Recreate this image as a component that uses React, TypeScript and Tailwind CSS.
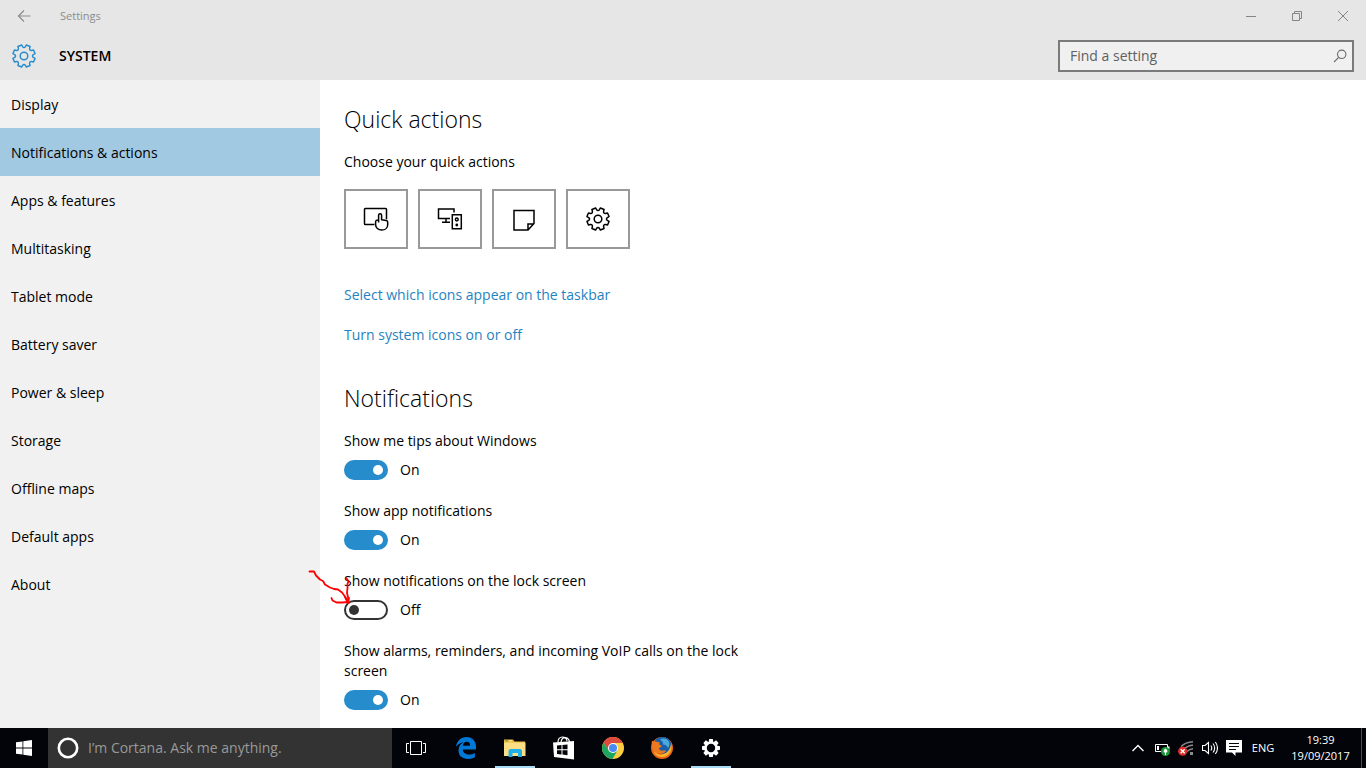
import { useState } from "react";
import type { ReactNode } from "react";

const sections = [
  "Display",
  "Notifications & actions",
  "Apps & features",
  "Multitasking",
  "Tablet mode",
  "Battery saver",
  "Power & sleep",
  "Storage",
  "Offline maps",
  "Default apps",
  "About",
];

const notificationSettings = [
  { id: "tips", label: "Show me tips about Windows", on: true },
  { id: "apps", label: "Show app notifications", on: true },
  { id: "lock", label: "Show notifications on the lock screen", on: false },
  {
    id: "alarms",
    label: "Show alarms, reminders, and incoming VoIP calls on the lock screen",
    on: true,
  },
];

// Outline of a cog with eight teeth, centred on 0,0
function cogPath(outer: number, inner: number, offset: number) {
  const at = (r: number, deg: number) => {
    const a = ((deg - 90) * Math.PI) / 180;
    return `${(r * Math.cos(a)).toFixed(2)} ${(r * Math.sin(a)).toFixed(2)}`;
  };
  let d = "";
  for (let i = 0; i < 8; i++) {
    const a = offset + i * 45;
    d += `${i === 0 ? "M" : "L"}${at(outer, a - 10)} L${at(outer, a + 10)} L${at(inner + 0.6, a + 14)} `;
    d += `Q${at(inner - 1.2, a + 22.5)} ${at(inner + 0.6, a + 31)} `;
  }
  return d + "Z";
}

function CogIcon({ className }: { className?: string }) {
  return (
    <svg viewBox="-12 -12 24 24" className={className} fill="none" stroke="currentColor" strokeWidth="1.5" strokeLinejoin="round">
      <path d={cogPath(11.3, 8.8, 22.5)} />
      <circle r="3.8" />
    </svg>
  );
}

/* Quick action icons */
function TabletModeIcon() {
  return (
    <svg viewBox="0 0 32 32" className="size-8" fill="none" stroke="black" strokeWidth="1.5" strokeLinejoin="round">
      <path d="M14.5 21.5H5.3a.8.8 0 0 1-.8-.8V6.3a.8.8 0 0 1 .8-.8h20.4a.8.8 0 0 1 .8.8v10" />
      <path d="M18.6 19.500v-7.300a1.500 1.500 0 0 1 3 0v4.600l4.600.7c1 .2 1.500.8 1.500 1.700v2.200c0 3.300-2.500 5.700-5.900 5.700-3.600 0-6.200-2.300-6.200-5.600v-2.700c0-1.200 1-2 3-1.900" />
    </svg>
  );
}

function ProjectIcon() {
  return (
    <svg viewBox="0 0 32 32" className="size-8" fill="none" stroke="black" strokeWidth="1.5">
      <path d="M16 15.500H4.500v-9.500h15.500v3.500M12 15.500v3.500M8 19.300h8" />
      <path d="M18.300 11.700h9v14h-9z" />
      <circle cx="22.800" cy="16.500" r="1.400" />
      <circle cx="22.800" cy="22" r="1.400" fill="black" stroke="none" />
    </svg>
  );
}

function NoteIcon() {
  return (
    <svg viewBox="0 0 32 32" className="size-8" fill="none" stroke="black" strokeWidth="1.500">
      <path d="M6 7.500h20v13l-6 6.500H6zM26 21h-6v6" />
    </svg>
  );
}

const quickActions = [
  { name: "Tablet mode", icon: <TabletModeIcon /> },
  { name: "Project", icon: <ProjectIcon /> },
  { name: "Note", icon: <NoteIcon /> },
  { name: "All settings", icon: <CogIcon className="size-6" /> },
];

/* Taskbar icons */
function EdgeIcon() {
  return (
    <svg viewBox="0 0 20 22" className="h-[22px] w-5" fill="#0078d7">
      <path d="M0 9.700C.8 4 4.800 0 10.500 0 16.500 0 20 4.300 20 9.800v2.700H6.800c.2 3.500 3 5 6.300 5 2.200 0 4.100-.6 5.800-1.600v4.400c-1.900 1.100-4.200 1.700-6.900 1.700-5.800 0-9.500-3.300-9.500-8.700 0-3.700 2-6.700 5.200-8.300C4.500 5.700 2 7.200 0 9.700zM6.900 8.700h7.200c0-2.300-1-3.900-3.500-3.900-2.100 0-3.400 1.500-3.700 3.900z" />
    </svg>
  );
}

function ExplorerIcon() {
  return (
    <svg viewBox="0 0 22 18" className="h-[18px] w-[22px]">
      <path d="M0 .5h9l1.500 2H21V17H0z" fill="#e9b73c" />
      <path d="M1.500 1.300h2v1h-2z" fill="#3aa757" />
      <path d="M5 1.300h3v1H5z" fill="#fff3c4" />
      <path d="M0 3.500h21.500V17H0z" fill="#fcdf85" />
      <path d="M4.500 18v-6.500l1.500-1.500h10.500l1.500 1.500V18h-4v-4H8.500v4z" fill="#1fb0ea" />
    </svg>
  );
}

function StoreIcon() {
  return (
    <svg viewBox="0 0 22 24" className="h-6 w-[22px]">
      <path d="M5 6.500C5 2.500 7 1 9.500 1s4 1.500 4.500 4M8 6c.5-3 2-4.300 4-4.300 2.500 0 4 1.500 4.500 4.300" fill="none" stroke="white" strokeWidth="1.200" />
      <path d="M0 6.500 21 5v18.500L1 21z" fill="white" />
      <path d="M4 9.500l4.500-.5v4.300H4zM9.500 8.900l5-.5v4.900h-5zM4 14.300h4.500v4.200L4 18zM9.500 14.300h5v5l-5-.7z" fill="#020409" />
    </svg>
  );
}

function ChromeIcon() {
  return (
    <svg viewBox="-11 -11 22 22" className="size-[22px]">
      <circle r="11" fill="#ffcd40" />
      <path d="M-9.500-5.500A11 11 0 0 1 9.800-5H0L-4.300 2.500z" fill="#dd4b3e" />
      <path d="M-9.500-5.500A11 11 0 0 0-.5 11L4.500 2.500-4.300 2.500z" fill="#1da462" />
      <circle r="5" fill="white" />
      <circle r="4" fill="#4a8af4" />
    </svg>
  );
}

function FirefoxIcon() {
  return (
    <svg viewBox="0 0 22 22" className="size-[22px]">
      <circle cx="11" cy="11" r="11" fill="#e8641b" />
      <path d="M4 3.200C6 1 8.500 0 11.500 0c4 0 7.500 2.500 8.500 6 1 4.500-1 9.500-5.500 10.500C9.500 17.200 7 13 6 9z" fill="#1a5fa8" />
      <path d="M9 2.500c3-2 7-1 8.500 1.500s1 5-.5 7c-1-2.500-3-3.500-5-3.500C12.500 5.500 11 4 9 2.500z" fill="#49a9dd" />
      <path d="M1 3.500c.8 1 2 1.500 3.500 1.300 1.500-.3 3 0 4 .7l-.3 2 2.600 1.200c-.5 1.700-2 1.600-3 2.600.5 2 2 2.700 4 2.300 1.300-.3 2.200-.3 3.200.3-1 1.800-3 2.500-5 2l-5 1C1.500 14 0 9 1 3.500z" fill="#ee7a20" />
      <path d="M20 6.500c2 6-1.500 13-8 13.500C7.500 20.300 4 18 2.500 14.500c2.500 2.500 5.500 3.500 8.500 3 5-.8 8.500-5 9-11z" fill="#fbb52b" />
    </svg>
  );
}

function SettingsAppIcon() {
  return (
    <svg viewBox="-10 -10 20 20" className="size-5">
      <path d="M-1.800-9h3.600l.6 3.200h-4.800zM-1.800 9h3.600l.6-3.200h-4.800zM-9-1.800v3.600l3.200.6v-4.800zM9-1.800v3.600l-3.200.6v-4.800z" fill="white" />
      <path d="M-1.800-9h3.600l.6 3.200h-4.800zM-1.800 9h3.600l.6-3.200h-4.800zM-9-1.800v3.600l3.200.6v-4.800zM9-1.800v3.600l-3.200.6v-4.800z" fill="white" transform="rotate(45)" />
      <circle r="5.400" fill="none" stroke="white" strokeWidth="2.400" />
    </svg>
  );
}

const taskbarApps: { name: string; icon: ReactNode; open?: boolean }[] = [
  { name: "Microsoft Edge", icon: <EdgeIcon /> },
  { name: "File Explorer", icon: <ExplorerIcon />, open: true },
  { name: "Store", icon: <StoreIcon /> },
  { name: "Google Chrome", icon: <ChromeIcon /> },
  { name: "Firefox", icon: <FirefoxIcon /> },
  { name: "Settings", icon: <SettingsAppIcon />, open: true },
];

const trayIcons = [
  {
    name: "Show hidden icons",
    icon: <path d="M2.500 11 8 5.500l5.500 5.500" fill="none" stroke="white" strokeWidth="1.400" />,
  },
  {
    name: "Battery",
    icon: (
      <>
        <path d="M1.500 4.500h12v7h-12z" fill="none" stroke="white" />
        <path d="M3 6h2v4H3zM14 6.500h1.500v3H14z" fill="white" />
        <circle cx="11.500" cy="11.500" r="4.500" fill="#1d9a35" />
        <path d="M11.500 8.500c2 1.500 2.200 3 1.500 4h-3c-.7-1-.5-2.500 1.500-4zM11 12.500h1V15h-1z" fill="white" />
      </>
    ),
  },
  {
    name: "Network",
    icon: (
      <>
        <path d="M3 6.500C6 3.500 10 2 15 1.800M6 9c2.500-2.500 5.500-3.600 9-3.800M9 11.500c1.800-1.800 3.500-2.600 6-2.800" fill="none" stroke="#8b8b8b" strokeWidth="1.400" />
        <path d="M12 12h3v3h-3z" fill="#8b8b8b" />
        <circle cx="4.700" cy="11.200" r="4.600" fill="#dd2c2c" />
        <path d="m2.700 9.200 4 4m0-4-4 4" stroke="white" strokeWidth="1.400" />
      </>
    ),
  },
  {
    name: "Volume",
    icon: (
      <path d="M.5 5.500h2.500L6.500 2.500v11L3 10.500H.5zM8.800 5.500c1.200 1.500 1.200 3.500 0 5M11 3.500c2.200 2.500 2.200 6.500 0 9M13.300 2c2.900 3.500 2.900 8.500 0 12" fill="none" stroke="white" strokeWidth="1.100" />
    ),
  },
  {
    name: "Action center",
    icon: (
      <>
        <path d="M0 0h16v12.500H9.500V16L6 12.500H0z" fill="white" />
        <path d="M3 3.500h10M3 6.500h10M3 9.500h7" stroke="#020409" strokeWidth="1" />
      </>
    ),
  },
];

function TitleBar() {
  return (
    <header className="shrink-0 bg-[#e6e6e6]">
      <div className="flex h-8 items-center">
        <button aria-label="Back" className="flex h-8 w-12 items-center justify-center">
          <svg viewBox="0 0 14 14" className="size-3.5" fill="none" stroke="#8c8c8c" strokeWidth="1.200">
            <path d="M13.500 7H1.500M7 1.500 1.500 7 7 12.500" />
          </svg>
        </button>
        <span className="pl-3 text-[11px] text-[#8c8c8c]">Settings</span>
        <div className="ml-auto flex text-[#858585]">
          <button aria-label="Minimize" className="flex h-8 w-[46px] items-center justify-center">
            <svg viewBox="0 0 10 10" className="size-2.5" stroke="currentColor">
              <path d="M0 5.500h10" />
            </svg>
          </button>
          <button aria-label="Restore" className="flex h-8 w-[46px] items-center justify-center">
            <svg viewBox="0 0 10 10" className="size-2.5" fill="none" stroke="currentColor">
              <path d="M.5 2.500h7v7h-7zM2.500 2.500v-2h7v7h-2" />
            </svg>
          </button>
          <button aria-label="Close" className="flex h-8 w-[46px] items-center justify-center">
            <svg viewBox="0 0 10 10" className="size-2.5" stroke="currentColor">
              <path d="m0 0 10 10M10 0 0 10" />
            </svg>
          </button>
        </div>
      </div>
      <div className="flex h-12 items-center px-3">
        <CogIcon className="size-6 text-[#2a8dcd]" />
        <h1 className="ml-[23px] text-sm font-semibold">SYSTEM</h1>
        <label className="ml-auto flex h-8 w-[296px] items-center border-2 border-[#7a7a7a] bg-[#f0f0f0] pr-[5px] pl-2.5">
          <input
            type="text"
            aria-label="Find a setting"
            placeholder="Find a setting"
            className="min-w-0 flex-1 bg-transparent text-sm outline-none placeholder:text-[#606060]"
          />
          <svg viewBox="0 0 14 14" className="size-3.5" fill="none" stroke="#6b6b6b" strokeWidth="1.100">
            <circle cx="8.700" cy="5.300" r="4.200" />
            <path d="M5.700 8.300 1 13" />
          </svg>
        </label>
      </div>
    </header>
  );
}

function Sidebar({ active, onSelect }: { active: string; onSelect: (s: string) => void }) {
  return (
    <nav className="w-80 shrink-0 bg-[#f1f1f1]">
      {sections.map((section) => (
        <button
          key={section}
          onClick={() => onSelect(section)}
          className={`flex h-12 w-full items-center px-[11px] pt-0.5 text-left text-sm ${
            section === active ? "bg-[#a1c9e2]" : ""
          }`}
        >
          {section}
        </button>
      ))}
    </nav>
  );
}

// Hand drawn arrow pointing at the switch
function PenArrow() {
  return (
    <svg
      viewBox="0 0 50 40"
      className="pointer-events-none absolute -top-1 -left-9 h-10 w-[50px]"
      fill="none"
      stroke="#f00"
      strokeWidth="1.800"
      strokeLinejoin="round"
      strokeLinecap="round"
    >
      <path d="M1.500 4.500h4.500l2 4 4 4 3 1.500 2 3.500 5 3 4 1.500 4 .5 4 3 3 4 3 5.500" />
      <path d="M38.500 11.500l2 2.500-1 3v4l-.5 5 1 4 .5 6" />
      <path d="M23.500 31l1 2.500 4 2h6l5-.5M37 30l3 6 1-5" />
    </svg>
  );
}

export default function App() {
  const [active, setActive] = useState("Notifications & actions");
  const [settings, setSettings] = useState(notificationSettings);

  const toggle = (id: string) => {
    setSettings((prev) => prev.map((s) => (s.id === id ? { ...s, on: !s.on } : s)));
  };

  return (
    <div className="flex h-screen flex-col overflow-hidden bg-white font-['Open_Sans','Noto_Sans',sans-serif] text-black">
      <TitleBar />

      <div className="flex min-h-0 flex-1 overflow-hidden">
        <Sidebar active={active} onSelect={setActive} />

        <main className="min-w-0 flex-1 px-6 pt-[23px] text-sm leading-5">
          <h2 className="text-[23px] leading-8 font-light">Quick actions</h2>
          <p className="mt-[17px]">Choose your quick actions</p>
          <div className="mt-[17px] flex gap-2.5">
            {quickActions.map((action) => (
              <button
                key={action.name}
                aria-label={action.name}
                className="flex h-[60px] w-16 items-center justify-center border-2 border-[#999]"
              >
                {action.icon}
              </button>
            ))}
          </div>
          <div className="mt-9 flex flex-col items-start gap-5 text-[#1f83c1]">
            <a href="#taskbar">Select which icons appear on the taskbar</a>
            <a href="#system-icons">Turn system icons on or off</a>
          </div>

          <h2 className="mt-[37px] text-[23px] leading-8 font-light">Notifications</h2>
          <div className="mt-[17px] flex max-w-[420px] flex-col gap-[21px]">
            {settings.map((s) => (
              <div key={s.id} className="relative">
                <label htmlFor={s.id} className="block">
                  {s.label}
                </label>
                <div className="mt-[9px] flex items-center gap-3">
                  <input
                    id={s.id}
                    type="checkbox"
                    role="switch"
                    checked={s.on}
                    onChange={() => toggle(s.id)}
                    className="flex h-5 w-11 appearance-none items-center rounded-full border-2 border-[#333] px-[3px] before:size-2.5 before:rounded-full before:bg-[#333] checked:justify-end checked:border-[#278ccc] checked:bg-[#278ccc] checked:before:bg-white"
                  />
                  <span>{s.on ? "On" : "Off"}</span>
                </div>
                {s.id === "lock" && <PenArrow />}
              </div>
            ))}
          </div>
        </main>
      </div>

      <footer className="flex h-10 shrink-0 bg-[#020409] text-white">
        <button aria-label="Start" className="flex w-12 items-center justify-center">
          <svg viewBox="0 0 16 16" className="size-4" fill="white">
            <path d="M0 2.300 6.500 1.400v6.100H0zM7.300 1.300 16 0v7.500H7.300zM0 8.400h6.500v6.200L0 13.700zM7.300 8.400H16V16l-8.700-1.300z" />
          </svg>
        </button>
        <label className="flex w-[344px] items-center gap-[9px] bg-[#333] pl-[9px]">
          <svg viewBox="0 0 22 22" className="size-[22px]" fill="none" stroke="white" strokeWidth="2.600">
            <circle cx="11" cy="11" r="9.200" />
          </svg>
          <input
            type="text"
            aria-label="Ask Cortana"
            placeholder="I’m Cortana. Ask me anything."
            className="min-w-0 flex-1 bg-transparent text-sm outline-none placeholder:text-[#999]"
          />
        </label>
        <button aria-label="Task view" className="flex w-12 items-center justify-center">
          <svg viewBox="0 0 20 14" className="h-3.5 w-5" fill="none" stroke="white">
            <path d="M4.500.5h11v13h-11zM3 2.500H.5v9H3M17 2.500h2.500v9H17" />
          </svg>
        </button>
        <div className="ml-1.5 flex gap-[9px]">
          {taskbarApps.map((app) => (
            <button
              key={app.name}
              aria-label={app.name}
              className={`flex w-10 items-center justify-center border-y-2 border-t-transparent ${
                app.open ? "border-b-[#a9dbf5]" : "border-b-transparent"
              }`}
            >
              {app.icon}
            </button>
          ))}
        </div>

        <div className="ml-auto flex items-center text-[11px] leading-4">
          {trayIcons.map((t) => (
            <button key={t.name} aria-label={t.name} className="flex h-10 w-6 items-center justify-center">
              <svg viewBox="0 0 16 16" className="size-4">
                {t.icon}
              </svg>
            </button>
          ))}
          <button className="w-[34px] text-center">ENG</button>
          <button className="w-[81px] text-center">
            <span className="block">19:39</span>
            <span className="block">19/09/2017</span>
          </button>
          <button aria-label="Show desktop" className="h-10 w-[5px] border-l border-[#4a4c50]" />
        </div>
      </footer>
    </div>
  );
}
